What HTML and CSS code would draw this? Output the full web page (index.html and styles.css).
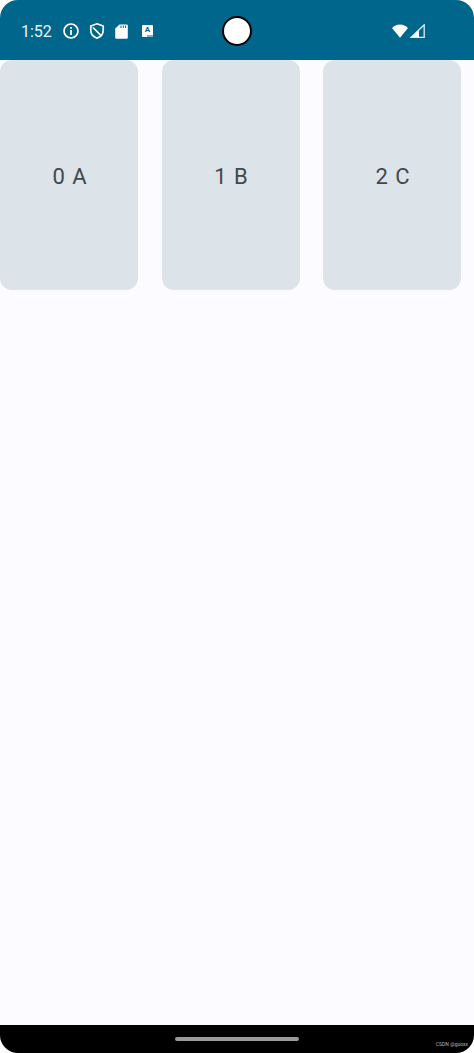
FILE: index.html
```html
<!DOCTYPE html>
<html lang="en">
<head>
<meta charset="utf-8">
<title>Cards</title>
<link rel="stylesheet" href="styles.css">
</head>
<body>
<div class="screen">
  <header class="status">
    <div class="status-left">
      <span class="time">1:52</span>
      <svg class="icon" viewBox="0 0 18 18"><circle cx="9" cy="9" r="7" fill="none" stroke="#fff" stroke-width="1.7"/><rect x="8.100" y="8" width="1.800" height="5" fill="#fff"/><rect x="8.100" y="5" width="1.800" height="1.800" fill="#fff"/></svg>
      <svg class="icon" viewBox="0 0 18 18"><path d="M9 1.800 15.200 4v4.600c0 3.600-2.600 6.300-6.200 7.600-3.600-1.300-6.200-4-6.200-7.600V4z" fill="none" stroke="#fff" stroke-width="1.700"/><path d="M5 5.500 12.500 13" stroke="#fff" stroke-width="1.700"/></svg>
      <svg class="card-icon" viewBox="0 0 13 15"><path d="M4.500 0.500H11.500a1.300 1.300 0 0 1 1.300 1.300v11.700a1.300 1.300 0 0 1-1.300 1.300H1.500a1.300 1.300 0 0 1-1.300-1.300V4.500z" fill="#fff"/><path d="M6 1.500v2.500M8.300 1.500v2.500M10.600 1.500v2.500" stroke="#00668b" stroke-width="1"/></svg>
      <span class="app-icon"><span class="app-letter">A</span></span>
    </div>
    <div class="status-right">
      <svg class="wifi" viewBox="0 0 16 14"><path d="M0 4C2.200 1.700 5 0.500 8 0.500s5.800 1.200 8 3.500L8 13.700z" fill="#fff"/></svg>
      <svg class="signal" viewBox="0 0 15 14"><path d="M14.200 0.800V13.300H1.200z" fill="none" stroke="#d9f1fb" stroke-width="1.300"/><path d="M9 13V6L2 13z" fill="#fff"/></svg>
    </div>
  </header>
  <div class="camera"></div>
  <main class="content">
    <div class="card">0 A</div>
    <div class="card">1 B</div>
    <div class="card">2 C</div>
  </main>
  <footer class="nav">
    <span class="handle"></span>
    <span class="mark">CSDN @guoxx</span>
  </footer>
</div>
</body>
</html>
```
FILE: styles.css
```css
* { box-sizing: border-box; }
html, body { margin: 0; padding: 0; background: #fff; }
.screen {
  position: relative;
  width: 474px;
  height: 1053px;
  display: flex;
  flex-direction: column;
  overflow: hidden;
  background: #fcfbff;
  font-family: Roboto, "Liberation Sans", sans-serif;
  border-radius: 18px;
}
.status {
  flex: 0 0 60px;
  display: flex;
  align-items: center;
  justify-content: space-between;
  padding: 2px 49px 0 21px;
  background: #00668b;
  color: #fff;
}
.status-left { display: flex; align-items: center; gap: 8px; }
.time { font-size: 16px; margin-right: 2px; color: #e8f3f7; }
.icon { width: 18px; height: 18px; display: block; }
.card-icon { width: 13px; height: 15px; display: block; margin-left: 1px; }
.app-icon {
  position: relative;
  width: 11px;
  height: 12px;
  margin-left: 6px;
  background: #fff;
  display: flex;
  justify-content: center;
  border-radius: 1px;
}
.app-icon::after {
  content: "";
  position: absolute;
  right: 0;
  bottom: 0;
  width: 6px;
  height: 2px;
  background: #7fb2c5;
}
.app-letter { font-size: 8px; font-weight: 700; line-height: 10px; color: #00668b; }
.status-right { display: flex; align-items: center; gap: 2px; }
.wifi { width: 16px; height: 14px; display: block; }
.signal { width: 15px; height: 14px; display: block; }
.camera {
  position: absolute;
  left: 222px;
  top: 16px;
  width: 30px;
  height: 30px;
  border-radius: 50%;
  background: #fff;
  border: 2px solid #000;
}
.content {
  flex: 1;
  display: grid;
  grid-template-columns: repeat(3, 138px);
  justify-content: start;
  column-gap: 23.5px;
  align-content: start;
}
.card {
  height: 230px;
  display: flex;
  align-items: center;
  justify-content: center;
  padding: 2px 0 0 2px;
  background: #dce3e9;
  border-radius: 12px;
  color: #41484d;
  font-size: 22px;
  letter-spacing: 1px;
}
.nav {
  position: relative;
  flex: 0 0 28px;
  display: flex;
  align-items: center;
  justify-content: center;
  background: #000;
}
.handle {
  width: 124px;
  height: 4px;
  margin-left: -1px;
  border-radius: 2px;
  background: #9a9a9a;
}
.mark {
  position: absolute;
  right: 6px;
  bottom: 6px;
  font-size: 5px;
  color: #b5b5b5;
}
```
